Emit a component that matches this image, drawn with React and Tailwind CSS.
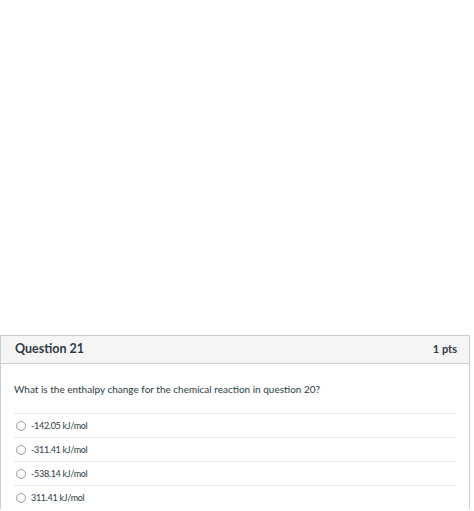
export default function App() {
  const options = ["-142.05 kJ/mol", "-311.41 kJ/mol", "-538.14 kJ/mol", "311.41 kJ/mol"];
  return (
    <div className="w-[474px] h-[511px] overflow-hidden bg-white text-[#2d3b45]" style={{ fontFamily: "Lato, 'Open Sans', sans-serif" }}>
      <div className="h-[335px]" />
      <div className="w-[470px] border-t border-r border-l border-[#c7cdd1]">
        <div className="h-[28px] bg-[#f5f5f5] border-b border-[#c7cdd1] flex items-center justify-between pl-[14px] pr-[12px]">
          <span className="text-[12.5px] font-bold">Question 21</span>
          <span className="text-[11px] font-bold">1 pts</span>
        </div>
        <div className="px-[13px] pt-[17px]">
          <div className="text-[10px] leading-[16px] mb-[16px]">What is the enthalpy change for the chemical reaction in question 20?</div>
          {options.map((o) => (
            <div key={o} className="h-[24px] border-t border-[#e5e7e8] flex items-center">
              <span className="ml-[2px] w-[10px] h-[10px] rounded-full border border-[#9aa0a4] bg-white" />
              <span className="ml-[5px] text-[9px] tracking-[-0.3px]">{o}</span>
            </div>
          ))}
        </div>
      </div>
    </div>
  );
}
